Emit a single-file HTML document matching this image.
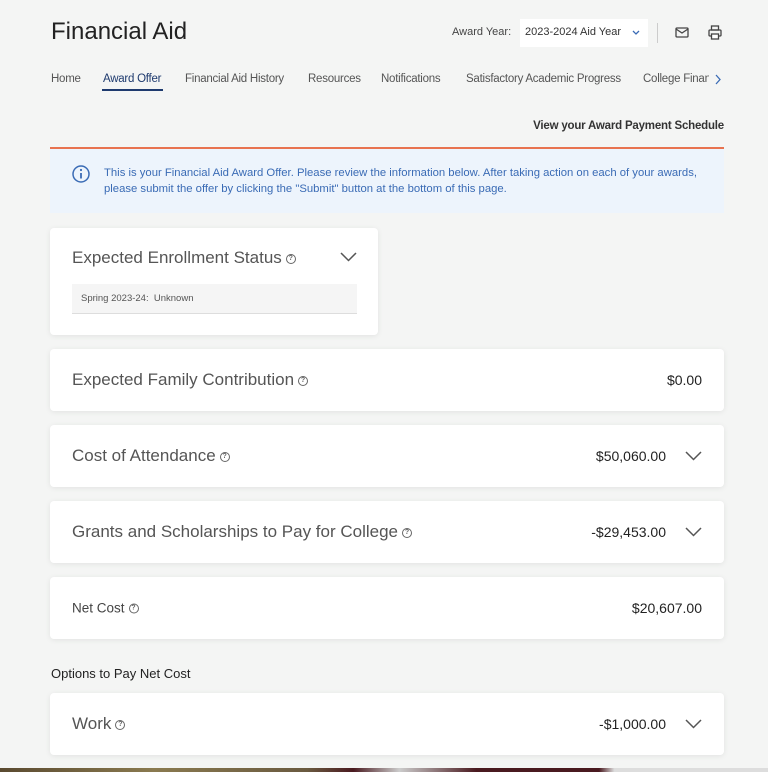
<!DOCTYPE html>
<html><head><meta charset="utf-8"><style>
*{margin:0;padding:0;box-sizing:border-box}
body{width:768px;height:772px;overflow:hidden;background:#f4f5f4;font-family:"Liberation Sans",sans-serif;color:#333;position:relative}
.a{position:absolute;white-space:nowrap}
.card{position:absolute;left:50px;width:674px;background:#fff;border-radius:4px;box-shadow:0 1px 6px rgba(0,0,0,.08)}
.t{position:absolute;left:22px;font-size:17px;color:#555;top:50%;transform:translateY(-50%)}
.q{display:inline-block;width:10px;height:10px;border:1px solid #666;border-radius:50%;font-size:7px;line-height:8px;text-align:center;vertical-align:3px;margin-left:4px;color:#666;font-weight:bold}
.amt{position:absolute;right:22px;font-size:14px;color:#222;top:50%;transform:translateY(-50%)}
.amt.c{right:58px}
.chev{position:absolute;right:22px;top:50%;margin-top:-5px}
.nav{font-size:11.5px;color:#555;top:73px;letter-spacing:-0.25px}
</style></head><body>
<div class="a" style="left:51px;top:18px;font-size:24px;color:#222">Financial Aid</div>
<div class="a" style="left:452px;top:26px;font-size:11px;color:#444">Award Year:</div>
<div class="a" style="left:520px;top:19px;width:128px;height:28px;background:#fff"></div>
<div class="a" style="left:525px;top:26px;font-size:11px;color:#333">2023-2024 Aid Year</div>
<svg class="a" style="left:632px;top:30px" width="8" height="6"><path d="M1 1l3 3 3-3" stroke="#3a6bb5" fill="none" stroke-width="1.3"/></svg>
<div class="a" style="left:657px;top:23px;width:1px;height:20px;background:#ccc"></div>
<svg class="a" style="left:675px;top:27px" width="14" height="11"><rect x="1" y="1" width="12" height="9" fill="none" stroke="#444" stroke-width="1.3" rx="1"/><path d="M1 2l6 4 6-4" fill="none" stroke="#444" stroke-width="1.3"/></svg>
<svg class="a" style="left:708px;top:25px" width="14" height="15"><rect x="3.5" y="1" width="7" height="4" fill="none" stroke="#444" stroke-width="1.3"/><rect x="1" y="5" width="12" height="6" rx="1" fill="none" stroke="#444" stroke-width="1.3"/><rect x="3.5" y="9" width="7" height="5" fill="#fff" stroke="#444" stroke-width="1.3"/></svg>
<div class="a nav" style="left:51px">Home</div>
<div class="a nav" style="left:103px;color:#1e3a6e">Award Offer</div>
<div class="a" style="left:102px;top:89px;width:61px;height:2px;background:#1e3a6e"></div>
<div class="a nav" style="left:185px">Financial Aid History</div>
<div class="a nav" style="left:308px">Resources</div>
<div class="a nav" style="left:381px">Notifications</div>
<div class="a nav" style="left:466px">Satisfactory Academic Progress</div>
<div class="a nav" style="left:643px;width:66px;overflow:hidden">College Financing</div>
<svg class="a" style="left:715px;top:74px" width="7" height="11"><path d="M1 1l4 4.5L1 10" stroke="#3a6bb5" fill="none" stroke-width="1.3"/></svg>
<div class="a" style="right:44px;top:120px;font-size:11.5px;color:#333;font-weight:bold;letter-spacing:-0.2px">View your Award Payment Schedule</div>
<div class="a" style="left:50px;top:147px;width:674px;height:2px;background:#e8734f"></div>
<div class="a" style="left:50px;top:149px;width:674px;height:64px;background:#edf4fc"></div>
<svg class="a" style="left:72px;top:165px" width="18" height="18"><circle cx="9" cy="9" r="8" fill="none" stroke="#3a6bb5" stroke-width="1.5"/><circle cx="9" cy="5" r="1.1" fill="#3a6bb5"/><path d="M9 8v5.5" stroke="#3a6bb5" stroke-width="1.8"/></svg>
<div class="a" style="left:104px;top:166px;font-size:11.3px;line-height:15.5px;color:#3a6bb5">This is your Financial Aid Award Offer. Please review the information below. After taking action on each of your awards,<br>please submit the offer by clicking the "Submit" button at the bottom of this page.</div>

<div class="card" style="top:228px;width:328px;height:107px">
<div class="a" style="left:22px;top:20px;font-size:17px;color:#555">Expected Enrollment Status<span class="q">?</span></div>
<svg class="a" style="left:290px;top:24px" width="17" height="10"><path d="M1 1l7.5 7.5L16 1" stroke="#555" fill="none" stroke-width="1.5"/></svg>
<div class="a" style="left:22px;top:56px;width:285px;height:30px;background:#f5f5f5;border-bottom:1px solid #ddd;font-size:9.5px;color:#555;padding:9px 9px">Spring 2023-24:&nbsp; Unknown</div>
</div>

<div class="card" style="top:349px;height:62px"><div class="t">Expected Family Contribution<span class="q">?</span></div><div class="amt">$0.00</div></div>
<div class="card" style="top:425px;height:62px"><div class="t">Cost of Attendance<span class="q">?</span></div><div class="amt c">$50,060.00</div><svg class="chev" width="17" height="10"><path d="M1 1l7.5 7.5L16 1" stroke="#555" fill="none" stroke-width="1.5"/></svg></div>
<div class="card" style="top:501px;height:62px"><div class="t">Grants and Scholarships to Pay for College<span class="q">?</span></div><div class="amt c">-$29,453.00</div><svg class="chev" width="17" height="10"><path d="M1 1l7.5 7.5L16 1" stroke="#555" fill="none" stroke-width="1.5"/></svg></div>
<div class="card" style="top:577px;height:62px"><div class="t" style="font-size:13.5px;color:#444">Net Cost<span class="q">?</span></div><div class="amt">$20,607.00</div></div>
<div class="a" style="left:51px;top:666px;font-size:13px;color:#222">Options to Pay Net Cost</div>
<div class="card" style="top:693px;height:62px"><div class="t">Work<span class="q">?</span></div><div class="amt c">-$1,000.00</div><svg class="chev" width="17" height="10"><path d="M1 1l7.5 7.5L16 1" stroke="#555" fill="none" stroke-width="1.5"/></svg></div>
<div class="a" style="left:0;top:768px;width:768px;height:4px;background:linear-gradient(90deg,#5a4a30 0,#8a7a50 20%,#6a5a40 40%,#4a1a20 46%,#ccc 52%,#4a1a20 62%,#4a1a20 78%,#ddd 80%,#ddd 100%)"></div>
</body></html>
